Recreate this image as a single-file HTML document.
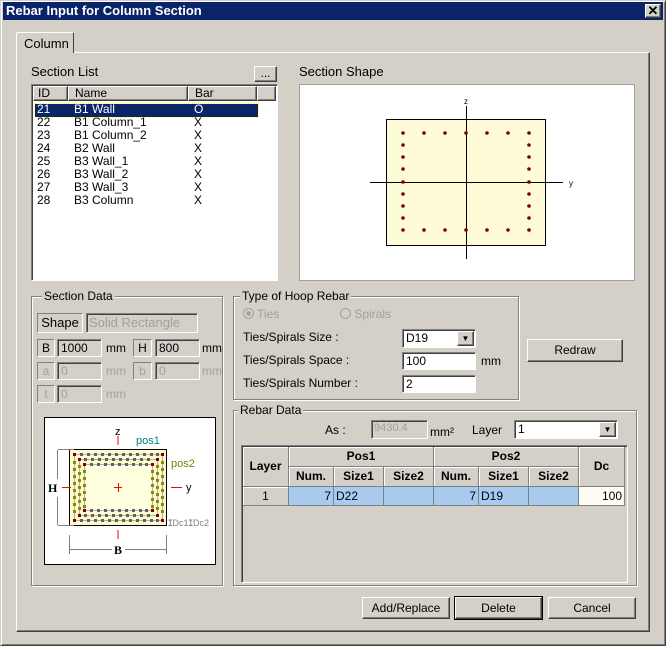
<!DOCTYPE html>
<html><head><meta charset="utf-8"><style>
*{box-sizing:border-box;margin:0;padding:0}
body{width:666px;height:646px;background:#d4d0c8;font-family:"Liberation Sans",sans-serif;font-size:12px;color:#000;position:relative;overflow:hidden}
.a{position:absolute;white-space:nowrap}
.raised{border:1px solid;border-color:#fff #404040 #404040 #fff;box-shadow:inset -1px -1px #808080}
.sunk{border:1px solid;border-color:#808080 #fff #fff #808080;box-shadow:inset 1px 1px #404040}
.grp{position:absolute;border:1px solid #808080;box-shadow:1px 1px #fff, inset 1px 1px #fff}
.gl{position:absolute;background:#d4d0c8;padding:0 2px;top:-8px;left:8px;line-height:14px}
.btn{position:absolute;text-align:center;line-height:19px;border:1px solid;border-color:#fff #404040 #404040 #fff;box-shadow:inset -1px -1px #808080}
.dis{color:#a0a0a0}
.fld{position:absolute;background:#fff;padding-left:2px;line-height:15px}
.lbl{position:absolute;border:1px solid;border-color:#808080 #fff #fff #808080;text-align:center;line-height:16px}
.gc{position:absolute;border-right:1px solid #808080;border-bottom:1px solid #808080;text-align:center;font-weight:bold;line-height:18px;background:#d4d0c8;box-shadow:inset 1px 1px #fff}
.dc{position:absolute;border-right:1px solid #808080;border-bottom:1px solid #808080;line-height:18px;background:#a6caf0;padding:0 2px}
</style></head><body>
<div class="a" style="left:0;top:0;width:666px;height:646px;border:1px solid;border-color:#d4d0c8 #404040 #404040 #d4d0c8;box-shadow:inset 1px 1px #fff,inset -1px -1px #808080"></div>
<div class="a" style="left:3px;top:2px;width:660px;height:18px;background:#0a246a"></div>
<div class="a" style="left:6px;top:3px;color:#fff;font-weight:bold;font-size:13px;line-height:16px">Rebar Input for Column Section</div>
<div class="a raised" style="left:645px;top:4px;width:16px;height:14px;background:#d4d0c8;font-size:13px;font-weight:bold;text-align:center;line-height:12px">✕</div>

<div class="a" style="left:16px;top:52px;width:634px;height:580px;border:1px solid;border-color:#fff #404040 #404040 #fff;box-shadow:inset -1px -1px #808080"></div>
<div class="a" style="left:16px;top:32px;width:58px;height:21px;border:1px solid;border-color:#fff #404040 transparent #fff;border-bottom:none;background:#d4d0c8;padding:3px 0 0 7px;font-size:13px;border-radius:2px 2px 0 0">Column</div>

<div class="a" style="left:31px;top:64px;font-size:13px">Section List</div>
<div class="btn" style="left:254px;top:66px;width:23px;height:16px;line-height:12px">...</div>
<div class="a sunk" style="left:31px;top:84px;width:247px;height:197px;background:#fff"></div>
<div class="a raised" style="left:33px;top:86px;width:35px;height:15px;background:#d4d0c8;padding-left:4px;line-height:13px">ID</div>
<div class="a raised" style="left:68px;top:86px;width:120px;height:15px;background:#d4d0c8;padding-left:6px;line-height:13px">Name</div>
<div class="a raised" style="left:188px;top:86px;width:69px;height:15px;background:#d4d0c8;padding-left:6px;line-height:13px">Bar</div>
<div class="a raised" style="left:257px;top:86px;width:19px;height:15px;background:#d4d0c8"></div>
<div class="a" style="left:35px;top:104px;width:223px;height:13px;background:#0a246a;outline:1px dotted #ff0"></div>
<div class="a" style="left:37px;top:103px;line-height:13px;font-size:12px">
<div style="position:relative"><span style="color:#fff">21</span><span style="position:absolute;left:37px;color:#fff">B1 Wall</span><span style="position:absolute;left:157px;color:#fff">O</span></div>
<div style="position:relative">22<span style="position:absolute;left:37px">B1 Column_1</span><span style="position:absolute;left:157px">X</span></div>
<div style="position:relative">23<span style="position:absolute;left:37px">B1 Column_2</span><span style="position:absolute;left:157px">X</span></div>
<div style="position:relative">24<span style="position:absolute;left:37px">B2 Wall</span><span style="position:absolute;left:157px">X</span></div>
<div style="position:relative">25<span style="position:absolute;left:37px">B3 Wall_1</span><span style="position:absolute;left:157px">X</span></div>
<div style="position:relative">26<span style="position:absolute;left:37px">B3 Wall_2</span><span style="position:absolute;left:157px">X</span></div>
<div style="position:relative">27<span style="position:absolute;left:37px">B3 Wall_3</span><span style="position:absolute;left:157px">X</span></div>
<div style="position:relative">28<span style="position:absolute;left:37px">B3 Column</span><span style="position:absolute;left:157px">X</span></div>
</div>

<div class="a" style="left:299px;top:64px;font-size:13px">Section Shape</div>
<svg class="a" style="left:299px;top:84px" width="336" height="197">
<rect x="0.5" y="0.5" width="335" height="196" fill="#fff" stroke="#a0a0a0"/>
<rect x="87.5" y="35.5" width="159" height="126" fill="#fefbd8" stroke="#000"/>
<line x1="71" y1="98.5" x2="264" y2="98.5" stroke="#000"/>
<line x1="167.5" y1="22" x2="167.5" y2="175" stroke="#000"/>
<text x="165" y="20" font-size="8" font-family="Liberation Sans">z</text>
<text x="270" y="102" font-size="8" font-family="Liberation Sans">y</text>
<g fill="#800000">
<circle cx="104" cy="49" r="1.8"/><circle cx="125" cy="49" r="1.8"/><circle cx="146" cy="49" r="1.8"/><circle cx="167" cy="49" r="1.8"/><circle cx="188" cy="49" r="1.8"/><circle cx="209" cy="49" r="1.8"/><circle cx="230" cy="49" r="1.8"/>
<circle cx="104" cy="146" r="1.8"/><circle cx="125" cy="146" r="1.8"/><circle cx="146" cy="146" r="1.8"/><circle cx="167" cy="146" r="1.8"/><circle cx="188" cy="146" r="1.8"/><circle cx="209" cy="146" r="1.8"/><circle cx="230" cy="146" r="1.8"/>
<circle cx="104" cy="61" r="1.8"/><circle cx="104" cy="73" r="1.8"/><circle cx="104" cy="85" r="1.8"/><circle cx="104" cy="98" r="1.8"/><circle cx="104" cy="110" r="1.8"/><circle cx="104" cy="122" r="1.8"/><circle cx="104" cy="134" r="1.8"/>
<circle cx="230" cy="61" r="1.8"/><circle cx="230" cy="73" r="1.8"/><circle cx="230" cy="85" r="1.8"/><circle cx="230" cy="98" r="1.8"/><circle cx="230" cy="110" r="1.8"/><circle cx="230" cy="122" r="1.8"/><circle cx="230" cy="134" r="1.8"/>
</g></svg>

<div class="grp" style="left:31px;top:296px;width:192px;height:290px"><div class="gl" style="left:10px">Section Data</div></div>
<div class="lbl" style="left:37px;top:313px;width:46px;height:20px;line-height:18px;font-size:13px">Shape</div>
<div class="a sunk dis" style="left:86px;top:313px;width:112px;height:20px;padding:1px 2px;font-size:13px">Solid Rectangle</div>
<div class="lbl" style="left:37px;top:339px;width:18px;height:18px">B</div>
<div class="a sunk" style="left:57px;top:339px;width:45px;height:18px;padding:1px 3px">1000</div>
<div class="a" style="left:106px;top:341px">mm</div>
<div class="lbl" style="left:133px;top:339px;width:19px;height:18px">H</div>
<div class="a sunk" style="left:155px;top:339px;width:45px;height:18px;padding:1px 3px">800</div>
<div class="a" style="left:202px;top:341px">mm</div>
<div class="lbl dis" style="left:37px;top:362px;width:18px;height:18px">a</div>
<div class="a sunk dis" style="left:57px;top:362px;width:45px;height:18px;padding:1px 3px">0</div>
<div class="a dis" style="left:106px;top:364px">mm</div>
<div class="lbl dis" style="left:133px;top:362px;width:19px;height:18px">b</div>
<div class="a sunk dis" style="left:155px;top:362px;width:45px;height:18px;padding:1px 3px">0</div>
<div class="a dis" style="left:202px;top:364px">mm</div>
<div class="lbl dis" style="left:37px;top:385px;width:18px;height:18px">t</div>
<div class="a sunk dis" style="left:57px;top:385px;width:45px;height:18px;padding:1px 3px">0</div>
<div class="a dis" style="left:106px;top:387px">mm</div>

<svg class="a" style="left:44px;top:417px" width="172" height="148" font-family="Liberation Sans">
<rect x="0.5" y="0.5" width="171" height="147" fill="#fff" stroke="#000"/>
<rect x="25.5" y="32.5" width="97" height="76" fill="#fefbcf" stroke="#000"/>
<rect x="40" y="47" width="69" height="46" fill="#ffffe0"/>
<g fill="none" stroke="#b0b0b0">
<rect x="30.5" y="37.5" width="88" height="66"/><rect x="35.5" y="42.5" width="78" height="56"/><rect x="40.5" y="47.5" width="68" height="46"/></g>
<g fill="#606060">
<path d="M36 36h3v3h-3zM43 36h3v3h-3zM50 36h3v3h-3zM57 36h3v3h-3zM64 36h3v3h-3zM71 36h3v3h-3zM78 36h3v3h-3zM85 36h3v3h-3zM92 36h3v3h-3zM99 36h3v3h-3zM106 36h3v3h-3zM112 36h3v3h-3z"/>
<path d="M40 41h3v3h-3zM47 41h3v3h-3zM54 41h3v3h-3zM61 41h3v3h-3zM68 41h3v3h-3zM75 41h3v3h-3zM82 41h3v3h-3zM89 41h3v3h-3zM96 41h3v3h-3zM103 41h3v3h-3z"/>
<path d="M46 46h3v3h-3zM53 46h3v3h-3zM60 46h3v3h-3zM67 46h3v3h-3zM74 46h3v3h-3zM81 46h3v3h-3zM88 46h3v3h-3zM95 46h3v3h-3zM101 46h3v3h-3z"/>
<path d="M36 102h3v3h-3zM43 102h3v3h-3zM50 102h3v3h-3zM57 102h3v3h-3zM64 102h3v3h-3zM71 102h3v3h-3zM78 102h3v3h-3zM85 102h3v3h-3zM92 102h3v3h-3zM99 102h3v3h-3zM106 102h3v3h-3zM112 102h3v3h-3z"/>
<path d="M40 97h3v3h-3zM47 97h3v3h-3zM54 97h3v3h-3zM61 97h3v3h-3zM68 97h3v3h-3zM75 97h3v3h-3zM82 97h3v3h-3zM89 97h3v3h-3zM96 97h3v3h-3zM103 97h3v3h-3z"/>
<path d="M46 92h3v3h-3zM53 92h3v3h-3zM60 92h3v3h-3zM67 92h3v3h-3zM74 92h3v3h-3zM81 92h3v3h-3zM88 92h3v3h-3zM95 92h3v3h-3zM101 92h3v3h-3z"/>
</g>
<g fill="#8a8a00">
<path d="M29 44h3v3h-3zM29 51h3v3h-3zM29 58h3v3h-3zM29 65h3v3h-3zM29 72h3v3h-3zM29 79h3v3h-3zM29 86h3v3h-3zM29 93h3v3h-3z"/>
<path d="M34 48h3v3h-3zM34 55h3v3h-3zM34 62h3v3h-3zM34 69h3v3h-3zM34 76h3v3h-3zM34 83h3v3h-3zM34 90h3v3h-3z"/>
<path d="M39 53h3v3h-3zM39 60h3v3h-3zM39 67h3v3h-3zM39 74h3v3h-3zM39 81h3v3h-3zM39 88h3v3h-3z"/>
<path d="M117 44h3v3h-3zM117 51h3v3h-3zM117 58h3v3h-3zM117 65h3v3h-3zM117 72h3v3h-3zM117 79h3v3h-3zM117 86h3v3h-3zM117 93h3v3h-3z"/>
<path d="M112 48h3v3h-3zM112 55h3v3h-3zM112 62h3v3h-3zM112 69h3v3h-3zM112 76h3v3h-3zM112 83h3v3h-3zM112 90h3v3h-3z"/>
<path d="M107 53h3v3h-3zM107 60h3v3h-3zM107 67h3v3h-3zM107 74h3v3h-3zM107 81h3v3h-3zM107 88h3v3h-3z"/>
</g>
<g fill="#800000"><path d="M29 36h3v3h-3zM117 36h3v3h-3zM29 102h3v3h-3zM117 102h3v3h-3zM34 41h3v3h-3zM112 41h3v3h-3zM34 97h3v3h-3zM112 97h3v3h-3zM39 46h3v3h-3zM107 46h3v3h-3zM39 92h3v3h-3zM107 92h3v3h-3z"/></g>
<g stroke="#f00"><line x1="74" y1="19" x2="74" y2="28"/><line x1="74" y1="113" x2="74" y2="122"/><line x1="18" y1="70.5" x2="27" y2="70.5"/><line x1="127" y1="70.5" x2="138" y2="70.5"/><line x1="70" y1="70.5" x2="78" y2="70.5"/><line x1="74.5" y1="66" x2="74.5" y2="75"/></g>
<text x="71" y="18" font-size="11">z</text>
<text x="92" y="27" font-size="11" fill="#008080">pos1</text>
<text x="127" y="50" font-size="11" fill="#808000">pos2</text>
<text x="142" y="74" font-size="11">y</text>
<text x="4" y="75" font-size="12" font-weight="bold" font-family="Liberation Serif">H</text>
<g stroke="#808080"><line x1="14" y1="32.5" x2="30" y2="32.5"/><line x1="14" y1="108.5" x2="30" y2="108.5"/><line x1="13.5" y1="33" x2="13.5" y2="62"/><line x1="13.5" y1="80" x2="13.5" y2="108"/><line x1="25.5" y1="118" x2="25.5" y2="137"/><line x1="122.5" y1="118" x2="122.5" y2="137"/><line x1="26" y1="132.5" x2="68" y2="132.5"/><line x1="81" y1="132.5" x2="122" y2="132.5"/></g>
<text x="70" y="137" font-size="12" font-weight="bold" font-family="Liberation Serif">B</text>
<text x="124" y="109" font-size="9" fill="#808080">ⵊDc1ⵊDc2</text>
</svg>

<div class="grp" style="left:233px;top:296px;width:286px;height:104px"><div class="gl" style="left:6px">Type of Hoop Rebar</div></div>
<div class="a dis" style="left:243px;top:307px"><span style="display:inline-block;width:11px;height:11px;border-radius:50%;border:1px solid #a0a0a0;vertical-align:-1px;background:radial-gradient(#a0a0a0 2px,#d4d0c8 2.5px)"></span> Ties</div>
<div class="a dis" style="left:340px;top:307px"><span style="display:inline-block;width:11px;height:11px;border-radius:50%;border:1px solid #a0a0a0;vertical-align:-1px"></span> Spirals</div>
<div class="a" style="left:243px;top:330px">Ties/Spirals Size :</div>
<div class="a" style="left:243px;top:353px">Ties/Spirals Space :</div>
<div class="a" style="left:243px;top:376px">Ties/Spirals Number :</div>
<div class="a sunk" style="left:402px;top:329px;width:74px;height:19px;background:#fff;padding:1px 3px">D19</div>
<div class="a raised" style="left:457px;top:331px;width:17px;height:15px;background:#d4d0c8;font-size:8px;text-align:center;line-height:13px">▼</div>
<div class="a sunk" style="left:402px;top:352px;width:74px;height:18px;background:#fff;padding:1px 3px">100</div>
<div class="a" style="left:481px;top:354px">mm</div>
<div class="a sunk" style="left:402px;top:375px;width:74px;height:18px;background:#fff;padding:1px 3px">2</div>
<div class="btn" style="left:527px;top:339px;width:96px;height:23px;line-height:21px">Redraw</div>

<div class="grp" style="left:233px;top:410px;width:404px;height:176px"><div class="gl" style="left:4px">Rebar Data</div></div>
<div class="a" style="left:325px;top:423px">As :</div>
<div class="a sunk dis" style="left:371px;top:420px;width:57px;height:19px;padding:1px 2px;font-size:11px">9430.4</div>
<div class="a" style="left:430px;top:425px">mm²</div>
<div class="a" style="left:472px;top:423px">Layer</div>
<div class="a sunk" style="left:514px;top:420px;width:104px;height:19px;background:#fff;padding:1px 3px">1</div>
<div class="a raised" style="left:599px;top:422px;width:17px;height:15px;background:#d4d0c8;font-size:8px;text-align:center;line-height:13px">▼</div>

<div class="a sunk" style="left:241px;top:445px;width:387px;height:138px;background:#d4d0c8"></div>
<div class="gc" style="left:243px;top:447px;width:46px;height:40px;line-height:38px">Layer</div>
<div class="gc" style="left:289px;top:447px;width:145px;height:20px">Pos1</div>
<div class="gc" style="left:434px;top:447px;width:145px;height:20px">Pos2</div>
<div class="gc" style="left:579px;top:447px;width:46px;height:40px;line-height:38px">Dc</div>
<div class="gc" style="left:289px;top:467px;width:45px;height:20px">Num.</div>
<div class="gc" style="left:334px;top:467px;width:50px;height:20px">Size1</div>
<div class="gc" style="left:384px;top:467px;width:50px;height:20px">Size2</div>
<div class="gc" style="left:434px;top:467px;width:45px;height:20px">Num.</div>
<div class="gc" style="left:479px;top:467px;width:50px;height:20px">Size1</div>
<div class="gc" style="left:529px;top:467px;width:50px;height:20px">Size2</div>
<div class="gc" style="left:243px;top:487px;width:46px;height:19px;font-weight:normal">1</div>
<div class="dc" style="left:289px;top:487px;width:45px;height:19px;text-align:right">7</div>
<div class="dc" style="left:334px;top:487px;width:50px;height:19px">D22</div>
<div class="dc" style="left:384px;top:487px;width:50px;height:19px"></div>
<div class="dc" style="left:434px;top:487px;width:45px;height:19px;text-align:right">7</div>
<div class="dc" style="left:479px;top:487px;width:50px;height:19px">D19</div>
<div class="dc" style="left:529px;top:487px;width:50px;height:19px"></div>
<div class="dc" style="left:579px;top:487px;width:46px;height:19px;text-align:right;background:#fffcf4">100</div>

<div class="btn" style="left:362px;top:597px;width:88px;height:22px;line-height:20px">Add/Replace</div>
<div class="btn" style="left:455px;top:597px;width:87px;height:22px;line-height:20px;outline:1px solid #000">Delete</div>
<div class="btn" style="left:548px;top:597px;width:88px;height:22px;line-height:20px">Cancel</div>
</body></html>
